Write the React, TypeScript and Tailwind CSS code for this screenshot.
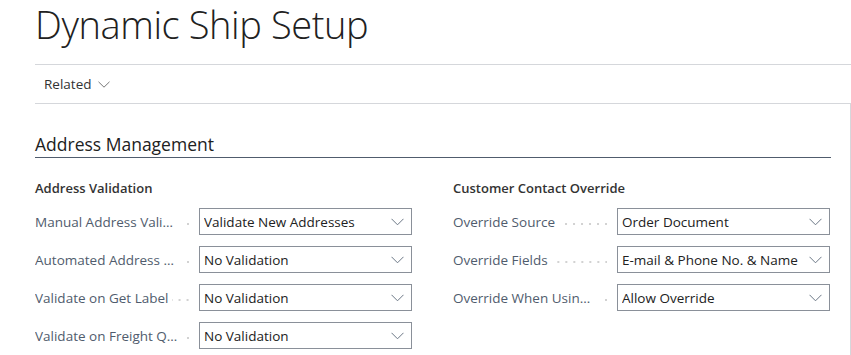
type Field = { label: string; value: string };

const addressFields: Field[] = [
  { label: "Manual Address Validation", value: "Validate New Addresses" },
  { label: "Automated Address Validation", value: "No Validation" },
  { label: "Validate on Get Label", value: "No Validation" },
  { label: "Validate on Freight Quote", value: "No Validation" },
];

const contactFields: Field[] = [
  { label: "Override Source", value: "Order Document" },
  { label: "Override Fields", value: "E-mail & Phone No. & Name" },
  { label: "Override When Using Shipping Agent", value: "Allow Override" },
];

function Chevron({ color = "#6b7785" }: { color?: string }) {
  return (
    <svg width="13" height="8" viewBox="0 0 13 8" className="shrink-0">
      <polyline points="0.5,0.8 6.5,6.8 12.5,0.8" fill="none" stroke={color} strokeWidth="1" />
    </svg>
  );
}

function FieldRow({ field }: { field: Field }) {
  return (
    <div className="flex items-center h-[27px]">
      <div className="flex items-center w-[164px] shrink-0 pr-[10px]">
        <span className="truncate text-[13.5px] text-[#505c6d] leading-[18px] max-w-[144px]">{field.label}</span>
        <span className="flex-1 h-[2px] mt-[4px] ml-[4px] bg-[linear-gradient(to_left,#d2d2d2_2px,transparent_2px)] bg-size-[8px_2px] bg-repeat-x bg-right"></span>
      </div>
      <div className="flex items-center justify-between w-[213px] h-[27px] border border-[#8a9099] bg-white pl-[4px] pr-[7px]">
        <span className="truncate text-[13.5px] text-[#212121] leading-[18px]">{field.value}</span>
        <Chevron />
      </div>
    </div>
  );
}

function Group({ title, fields }: { title: string; fields: Field[] }) {
  return (
    <div className="w-[377px]">
      <div className="text-[13px] font-semibold text-[#333] h-[20px] leading-[20px]">{title}</div>
      <div className="flex flex-col gap-[11px] mt-[10px]">
        {fields.map((f) => (
          <FieldRow key={f.label} field={f} />
        ))}
      </div>
    </div>
  );
}

export default function App() {
  return (
    <div className="w-[851px] h-[355px] bg-white overflow-hidden pl-[35px] font-['Segoe_UI','Open_Sans',sans-serif]">
      <h1 className="text-[38px] font-light text-[#212121] leading-none pt-[5px] h-[64px] tracking-[-0.4px]">
        Dynamic Ship Setup
      </h1>
      <div className="border-t border-[#d5d7db] h-[39px] flex items-center pl-[9px] gap-[7px]">
        <span className="text-[13.5px] text-[#333]">Related</span>
        <svg width="12" height="7" viewBox="0 0 12 7" className="mt-[1px]">
          <polyline points="0.5,0.8 6,6.2 11.5,0.8" fill="none" stroke="#777" strokeWidth="1" />
        </svg>
      </div>
      <div className="border-t border-r border-[#d5d7db] h-[260px] pr-[19px]">
        <div className="h-[54px] border-b border-[#505c6d] flex items-end pb-[4px]">
          <span className="text-[17.5px] text-[#212121] font-medium leading-none">Address Management</span>
        </div>
        <div className="flex gap-[41px] pt-[20px]">
          <Group title="Address Validation" fields={addressFields} />
          <Group title="Customer Contact Override" fields={contactFields} />
        </div>
      </div>
    </div>
  );
}
